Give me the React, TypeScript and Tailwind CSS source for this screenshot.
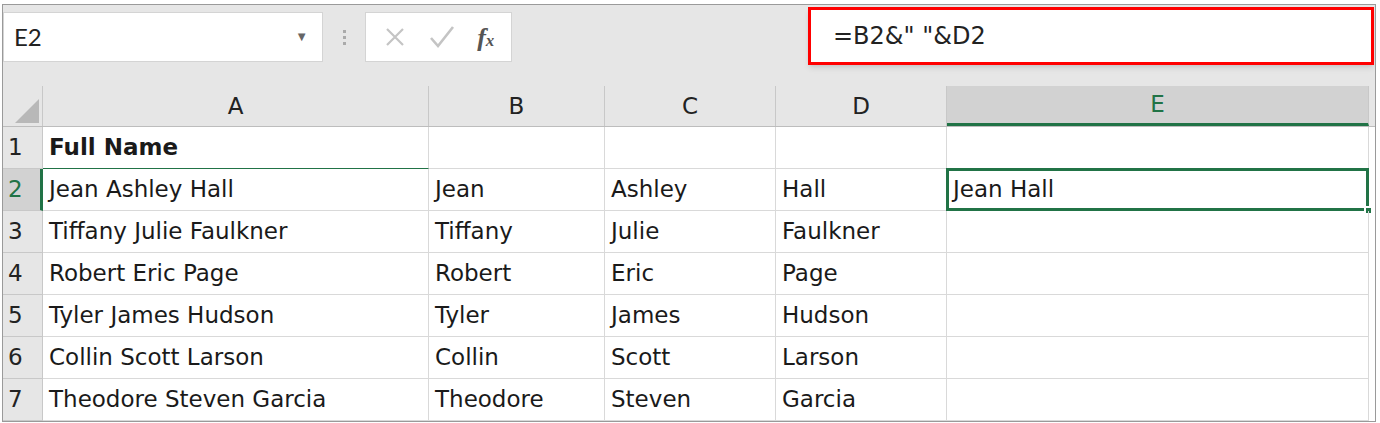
import React from "react";

const cols = [
  { k: "A", w: 386 },
  { k: "B", w: 176 },
  { k: "C", w: 171 },
  { k: "D", w: 171 },
  { k: "E", w: 422 },
];
const rows = [
  ["Full Name", "", "", "", ""],
  ["Jean Ashley Hall", "Jean", "Ashley", "Hall", "Jean Hall"],
  ["Tiffany Julie Faulkner", "Tiffany", "Julie", "Faulkner", ""],
  ["Robert Eric Page", "Robert", "Eric", "Page", ""],
  ["Tyler James Hudson", "Tyler", "James", "Hudson", ""],
  ["Collin Scott Larson", "Collin", "Scott", "Larson", ""],
  ["Theodore Steven Garcia", "Theodore", "Steven", "Garcia", ""],
];

export default function App() {
  return (
    <div className="w-[1380px] h-[423px] bg-white pt-[4px] pl-[2px]" style={{ fontFamily: "'DejaVu Sans', sans-serif" }}>
      <div className="w-[1374px] h-[418px] border border-[#9a9a9a] bg-white overflow-hidden">
        <div className="h-[81px] bg-[#e6e6e6] flex items-start pt-[7px] relative">
          <div className="w-[320px] h-[50px] bg-white border border-[#d4d4d4] flex items-center justify-between pl-[10px] pr-[14px] text-[22px] text-[#222]" style={{ fontFamily: "Lato, sans-serif" }}>
            <span className="text-[24px]">E2</span>
            <span className="text-[#666] text-[13px]">▼</span>
          </div>
          <div className="w-[42px] h-[50px] flex flex-col items-center justify-center gap-[3px]">
            <div className="w-[3px] h-[3px] bg-[#aaa]" />
            <div className="w-[3px] h-[3px] bg-[#aaa]" />
            <div className="w-[3px] h-[3px] bg-[#aaa]" />
          </div>
          <div className="w-[147px] h-[50px] bg-white border border-[#d4d4d4] flex items-center justify-around px-[6px]">
            <svg width="24" height="24" viewBox="0 0 24 24" stroke="#c4c4c4" strokeWidth="2.2" fill="none"><path d="M4 4L20 20M20 4L4 20" /></svg>
            <svg width="28" height="26" viewBox="0 0 28 26" stroke="#c4c4c4" strokeWidth="2.6" fill="none"><path d="M3 14L10 22L25 3" /></svg>
            <span className="italic font-bold text-[26px] text-[#555]" style={{ fontFamily: "'Liberation Serif', serif" }}>f<span className="text-[17px]">x</span></span>
          </div>
          <div className="ml-[296px] w-[566px] h-[58px] -mt-[5px] bg-white border-[3px] border-[#ff0000] shadow-md flex items-center pl-[22px] text-[24px] text-[#222]">
            =B2&amp;" "&amp;D2
          </div>
        </div>
        <div className="flex h-[41px] bg-[#e6e6e6] border-b border-[#bdbdbd]">
          <div className="w-[40px] border-r border-[#c8c8c8] relative">
            <svg className="absolute right-[3px] bottom-[3px]" width="24" height="24" viewBox="0 0 24 24"><path d="M24 0V24H0Z" fill="#b8b8b8" /></svg>
          </div>
          {cols.map((c) => (
            <div key={c.k} style={{ width: c.w }} className={`flex items-center justify-center text-[23px] border-r ${c.k === "E" ? "bg-[#d2d2d2] border-b-[3px] border-b-[#217346] text-[#217346] border-r-[#c8c8c8]" : "text-[#222] border-[#c8c8c8]"}`}>
              {c.k}
            </div>
          ))}
        </div>
        {rows.map((r, i) => (
          <div key={i} className="flex h-[42px]">
            <div className={`w-[40px] flex items-center pl-[5px] text-[23px] border-b border-r ${i === 1 ? "bg-[#d2d2d2] text-[#217346] border-r-[3px] border-r-[#217346] border-b-[#c8c8c8]" : "bg-[#e6e6e6] text-[#222] border-[#c8c8c8]"}`}>
              {i + 1}
            </div>
            {r.map((v, j) => {
              const sel = i === 1 && j === 4;
              return (
                <div
                  key={j}
                  style={{ width: cols[j].w }}
                  className={`relative flex items-center pl-[6px] text-[23px] text-[#1a1a1a] whitespace-nowrap border-b border-r border-[#d9d9d9] ${i === 0 && j === 0 ? "font-bold border-b-[#217346]" : ""}`}
                >
                  {v}
                  {sel && (
                    <>
                      <div className="absolute -left-[1px] -top-[1px] right-[-1px] bottom-[-1px] border-[3px] border-[#217346]" />
                      <div className="absolute -right-[5px] -bottom-[5px] w-[9px] h-[9px] bg-[#217346] border-2 border-white" />
                    </>
                  )}
                </div>
              );
            })}
          </div>
        ))}
      </div>
    </div>
  );
}
